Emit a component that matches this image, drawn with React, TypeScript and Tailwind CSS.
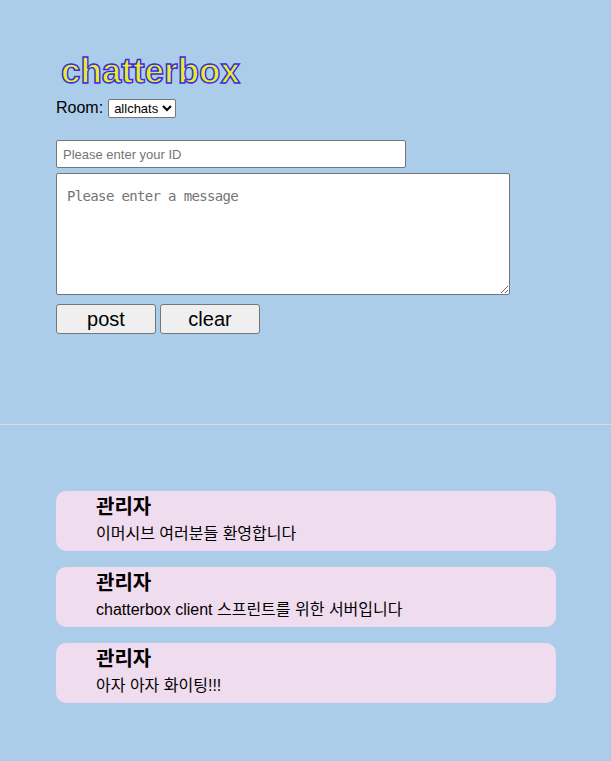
const messages = [
  { username: "관리자", text: "이머시브 여러분들 환영합니다" },
  { username: "관리자", text: "chatterbox client 스프린트를 위한 서버입니다" },
  { username: "관리자", text: "아자 아자 화이팅!!!" },
];

function Message({ username, text }: { username: string; text: string }) {
  return (
    <div className="w-[500px] h-[60px] rounded-[10px] bg-[#f0dcef] pl-[40px] pt-[2px] text-black">
      <div className="text-[20px] leading-[28px] font-bold">{username}</div>
      <div className="text-[16px] leading-[24px] pt-[1px]">{text}</div>
    </div>
  );
}

export default function App() {
  return (
    <div
      className="min-h-[761px] bg-[#abcde9] text-black"
      style={{ fontFamily: '"Liberation Sans", "Noto Sans CJK KR", sans-serif' }}
    >
      <div className="px-[56px] pt-[50px] h-[424px]">
        <h1 className="text-[35px] leading-[42px] font-bold text-[#e6ee2c] [-webkit-text-stroke:1.4px_#3a2be0] pl-[5px]">
          chatterbox
        </h1>
        <div className="flex items-center gap-[5px] mt-[4px] text-[16px]">
          <span>Room:</span>
          <select className="h-[19px] text-[13px] leading-none border border-[#767676] bg-white rounded-[2px] pl-[1px] pr-0">
            <option>allchats</option>
          </select>
        </div>
        <input
          className="block mt-[20px] w-[350px] h-[28px] border border-[#767676] bg-white rounded-[2px] px-[6px] text-[13px] placeholder:text-[#757575]"
          placeholder="Please enter your ID"
        />
        <textarea
          className="block mt-[5px] w-[454px] h-[122px] border border-[#767676] bg-white rounded-[2px] px-[10px] pt-[12px] text-[14px] leading-[20px] tracking-[-0.65px] placeholder:text-[#757575] resize"
          style={{ fontFamily: '"DejaVu Sans Mono", monospace' }}
          placeholder="Please enter a message"
        />
        <div className="flex gap-[4px] mt-[9px]">
          <button className="w-[100px] h-[30px] bg-[#efefef] border border-[#767676] rounded-[3px] text-[20px] leading-none">
            post
          </button>
          <button className="w-[100px] h-[30px] bg-[#efefef] border border-[#767676] rounded-[3px] text-[20px] leading-none">
            clear
          </button>
        </div>
      </div>
      <div className="h-px bg-[#d9dde0]" />
      <div className="px-[56px] pt-[66px] pb-[58px] flex flex-col gap-[16px]">
        {messages.map((m, i) => (
          <Message key={i} username={m.username} text={m.text} />
        ))}
      </div>
    </div>
  );
}
